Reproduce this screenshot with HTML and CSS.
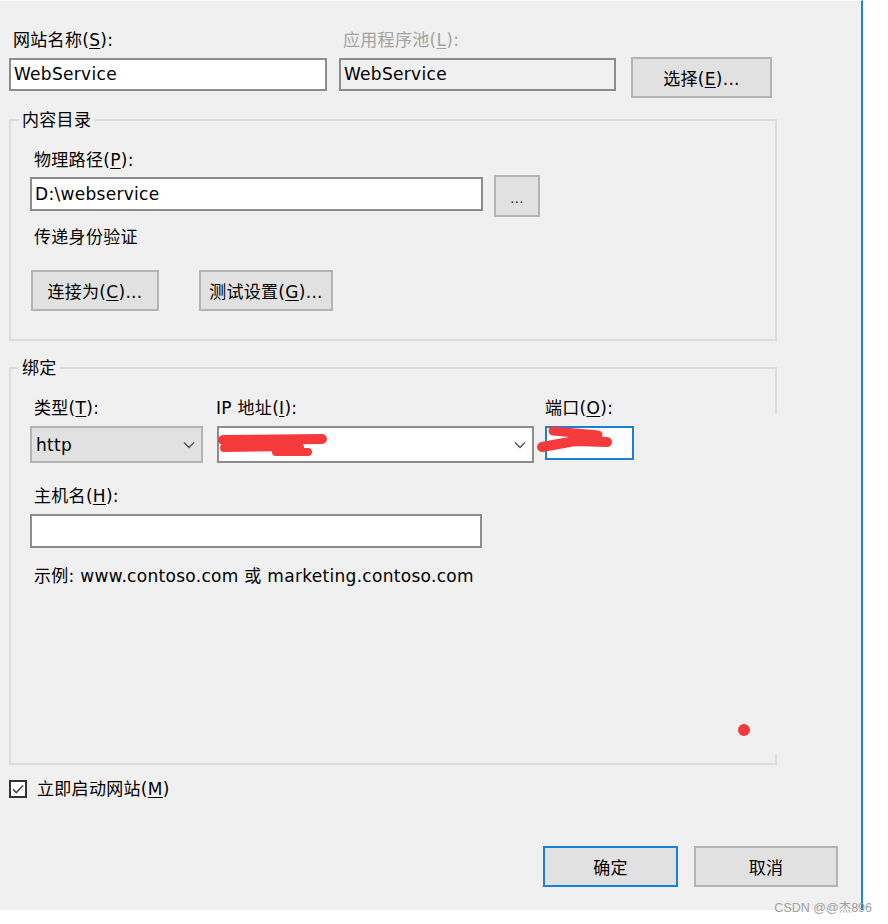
FILE: index.html
```html
<!DOCTYPE html>
<html lang="zh-CN">
<head>
<meta charset="utf-8">
<title>添加网站</title>
<link rel="stylesheet" href="styles.css">
</head>
<body>
<div class="window">
  <div class="top-grid">
    <div class="lbl ind">网站名称(<u>S</u>):</div>
    <div class="lbl ind disabled">应用程序池(<u>L</u>):</div>
    <div></div>
    <div class="field">WebService</div>
    <div class="field readonly">WebService</div>
    <button class="btn btn-select">选择(<u>E</u>)...</button>
  </div>

  <fieldset class="group group-content">
    <legend>内容目录</legend>
    <div class="lbl ind">物理路径(<u>P</u>):</div>
    <div class="path-row">
      <div class="field path">D:\webservice</div>
      <button class="btn btn-browse">...</button>
    </div>
    <div class="lbl ind pass">传递身份验证</div>
    <div class="btn-row">
      <button class="btn btn-connect">连接为(<u>C</u>)...</button>
      <button class="btn btn-test">测试设置(<u>G</u>)...</button>
    </div>
  </fieldset>

  <fieldset class="group group-bind">
    <legend>绑定</legend>
    <div class="bind-grid">
      <div class="lbl ind">类型(<u>T</u>):</div>
      <div class="lbl ip-lbl">IP 地址(<u>I</u>):</div>
      <div class="lbl">端口(<u>O</u>):</div>
      <div class="select type">
        <span>http</span>
        <svg class="chev" width="12" height="8" viewBox="0 0 12 8"><path d="M1 1.5 L6 6.5 L11 1.5" fill="none" stroke="#555" stroke-width="1.4"/></svg>
      </div>
      <div class="select ip">
        <span></span>
        <svg class="chev" width="12" height="8" viewBox="0 0 12 8"><path d="M1 1.5 L6 6.5 L11 1.5" fill="none" stroke="#555" stroke-width="1.4"/></svg>
      </div>
      <div class="field port"></div>
    </div>
    <div class="lbl ind host-lbl">主机名(<u>H</u>):</div>
    <div class="field host"></div>
    <div class="lbl ind example">示例: www.contoso.com 或 marketing.contoso.com</div>
  </fieldset>

  <div class="check-row">
    <span class="checkbox">
      <svg width="14" height="14" viewBox="0 0 14 14"><path d="M2 7.2 L5.3 10.5 L12 3.5" fill="none" stroke="#444" stroke-width="1.6"/></svg>
    </span>
    <span class="check-lbl">立即启动网站(<u>M</u>)</span>
  </div>

  <div class="footer">
    <button class="btn btn-ok">确定</button>
    <button class="btn btn-cancel">取消</button>
  </div>
</div>

<svg class="marks" width="888" height="924" viewBox="0 0 888 924">
  <g stroke="#f43a3a" stroke-linecap="round" fill="none">
    <path d="M223 440 L322 439" stroke-width="10"/>
    <path d="M224 448 L300 447" stroke-width="8"/>
    <path d="M276 452 L308 452" stroke-width="8"/>
    <path d="M553 431 L598 435" stroke-width="9"/>
    <path d="M542 447 L575 441 L607 442" stroke-width="10"/>
  </g>
  <circle cx="744" cy="730" r="6" fill="#f43a3a"/>
</svg>
<div class="watermark">CSDN @@杰896</div>
</body>
</html>
```

FILE: styles.css
```css
html, body {
  margin: 0;
  padding: 0;
  background: #ffffff;
}

body {
  position: relative;
  width: 888px;
  height: 924px;
  overflow: hidden;
  font-family: "DejaVu Sans", "Noto Sans CJK SC", sans-serif;
  font-size: 17px;
  letter-spacing: 0.3px;
  color: #000;
}

u {
  text-decoration: underline;
  text-underline-offset: 2px;
  text-decoration-thickness: 1px;
}

.window {
  box-sizing: border-box;
  width: 863px;
  height: 910px;
  background: #f0f0f0;
  border-top: 1px solid #fbfbfb;
  border-right: 2px solid #1a86d9;
  padding: 29px 0 0 9px;
}

.lbl {
  height: 20px;
  line-height: 20px;
  white-space: nowrap;
}

.ind {
  padding-left: 4px;
}

.disabled {
  color: #a3a3a3;
}

.field {
  box-sizing: border-box;
  height: 33px;
  line-height: 29px;
  background: #fff;
  border: 2px solid #8c8c8c;
  padding: 0 3px;
  white-space: nowrap;
  overflow: hidden;
}

.field.readonly {
  background: #f0f0f0;
}

.btn {
  box-sizing: border-box;
  height: 41px;
  background: #e1e1e1;
  border: 2px solid #b4b4b4;
  font-family: inherit;
  font-size: 17px;
  letter-spacing: 0.3px;
  color: #000;
  padding: 0;
  margin: 0;
}

.top-grid {
  display: grid;
  grid-template-columns: 318px 277px 144px;
  column-gap: 12px;
  row-gap: 8px;
  align-items: start;
}

.top-grid > :nth-child(3),
.top-grid > :nth-child(6) {
  margin-left: 3px;
}

.btn-select {
  margin-top: -1px;
}

.group {
  position: relative;
  margin: 0;
  border: 2px solid #dcdcdc;
  width: 768px;
  box-sizing: border-box;
  padding: 20px 0 0 19px;
  min-width: 0;
}

.group legend {
  padding: 0 3px;
  margin-left: -11px;
  height: 20px;
  line-height: 20px;
}

.group-content {
  margin-top: 12px;
  padding-bottom: 28px;
}

.path-row {
  display: flex;
  align-items: flex-start;
  gap: 11px;
  margin-top: 7px;
}

.field.path {
  width: 453px;
  height: 34px;
  line-height: 30px;
}

.btn-browse {
  width: 46px;
  height: 42px;
  margin-top: -2px;
  font-size: 13px;
  line-height: 1;
  padding-top: 4px;
}

.pass {
  margin-top: 10px;
}

.btn-row {
  display: flex;
  gap: 40px;
  margin-top: 23px;
  padding-left: 1px;
}

.btn-connect {
  width: 128px;
}

.btn-test {
  width: 134px;
}

.group-bind {
  margin-top: 17px;
  padding-bottom: 177px;
}

.group-bind::after {
  content: "";
  position: absolute;
  right: -2px;
  top: 35px;
  bottom: 8px;
  width: 2px;
  background: #f0f0f0;
}

.bind-grid {
  display: grid;
  grid-template-columns: 173px 317px 86px;
  column-gap: 14px;
  row-gap: 8px;
  align-items: start;
}

.bind-grid > :nth-child(3),
.bind-grid > :nth-child(6) {
  margin-left: -3px;
}

.ip-lbl {
  margin-left: -1px;
}

.select {
  box-sizing: border-box;
  height: 37px;
  display: flex;
  align-items: center;
  justify-content: space-between;
  padding: 0 6px 0 4px;
  border: 2px solid #b4b4b4;
  background: #e1e1e1;
}

.select.ip {
  background: #fff;
  border-color: #8c8c8c;
}

.chev {
  display: block;
}

.field.port {
  height: 34px;
  border-color: #1a7fd6;
}

.host-lbl {
  margin-top: 23px;
}

.field.host {
  width: 452px;
  height: 34px;
  margin-top: 8px;
}

.example {
  margin-top: 18px;
}

.check-row {
  display: flex;
  align-items: center;
  gap: 10px;
  margin-top: 15px;
  height: 18px;
}

.checkbox {
  box-sizing: border-box;
  width: 18px;
  height: 18px;
  border: 2px solid #333;
  background: #fff;
  display: flex;
  align-items: center;
  justify-content: center;
}

.checkbox svg {
  display: block;
}

.check-lbl {
  line-height: 20px;
}

.footer {
  display: flex;
  justify-content: flex-end;
  gap: 16px;
  margin-top: 48px;
  margin-right: 23px;
}

.btn-ok {
  width: 135px;
  border-color: #1a7fd6;
}

.btn-cancel {
  width: 144px;
}

.marks {
  position: absolute;
  left: 0;
  top: 0;
  pointer-events: none;
}

.watermark {
  position: absolute;
  right: 16px;
  top: 900px;
  font-family: "Liberation Sans", "Noto Sans CJK SC", sans-serif;
  font-size: 12.5px;
  letter-spacing: 0;
  line-height: 16px;
  color: #a0a0a0;
}
```
